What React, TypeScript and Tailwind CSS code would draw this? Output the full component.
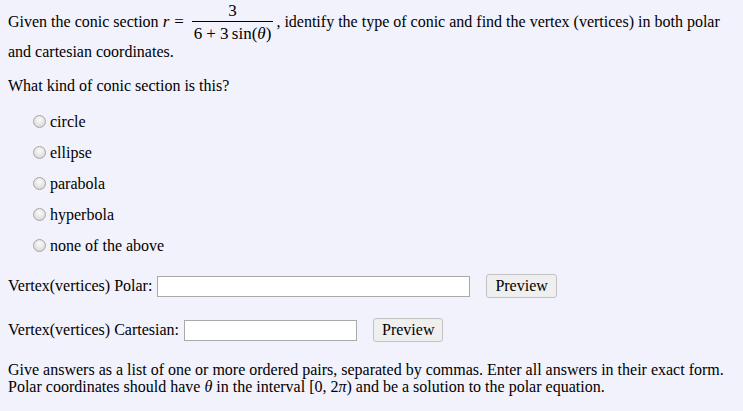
const options = ['circle', 'ellipse', 'parabola', 'hyperbola', 'none of the above'];

function Radio() {
  return (
    <span className="mt-[2px] h-[13px] w-[13px] shrink-0 rounded-full border border-[#a6a6a6] bg-[radial-gradient(circle_at_50%_35%,#fbfbfb_0%,#e4e4e4_55%,#cfcfcf_100%)]" />
  );
}

function PreviewButton() {
  return (
    <button className="h-[24px] rounded-[3px] border border-[#c2c2c2] bg-[#efefef] px-2 leading-[20px] text-black">
      Preview
    </button>
  );
}

export default function App() {
  return (
    <div className="min-h-screen bg-[#f2f2fc] px-2 pt-[2px] font-['Liberation_Serif','Times_New_Roman',serif] text-[16px] leading-[18px] text-black">
      {/* question */}
      <p className="mb-4">
        Given the conic section{' '}
        <span className="text-[17px]">
          <i>r</i>
          <span className="mx-[5px]">=</span>
        </span>
        <span className="mx-[3px] inline-flex flex-col items-center pb-[1px] align-[11px] text-[17px]">
          <span className="pb-[2px] leading-[17px]">3</span>
          <span className="w-full border-t border-black" />
          <span className="px-[2px] pt-[3px] leading-[17px]">
            6<span className="mx-[4px]">+</span>3&thinsp;sin(<i>θ</i>)
          </span>
        </span>
        , identify the type of conic and find the vertex (vertices) in both polar and cartesian coordinates.
      </p>

      <p>What kind of conic section is this?</p>

      <div className="mt-[18px] flex flex-col gap-[13px] pl-[25px]">
        {options.map((o) => (
          <label key={o} className="flex items-start gap-[4px]">
            <Radio />
            <span>{o}</span>
          </label>
        ))}
      </div>

      {/* answers */}
      <div className="mt-[19px] flex items-center">
        <span>Vertex(vertices) Polar:</span>
        <input className="ml-[5px] h-[21px] w-[313px] border border-[#a9a9a9] bg-white px-1" />
        <span className="ml-4">
          <PreviewButton />
        </span>
      </div>

      <div className="mt-[20px] flex items-center">
        <span>Vertex(vertices) Cartesian:</span>
        <input className="ml-[5px] h-[21px] w-[173px] border border-[#a9a9a9] bg-white px-1" />
        <span className="ml-4">
          <PreviewButton />
        </span>
      </div>

      <p className="mt-[19px] leading-[17px]">
        Give answers as a list of one or more ordered pairs, separated by commas. Enter all answers in their exact form.
        <br />
        Polar coordinates should have <i>θ</i> in the interval [0, 2<i>π</i>) and be a solution to the polar equation.
      </p>
    </div>
  );
}
